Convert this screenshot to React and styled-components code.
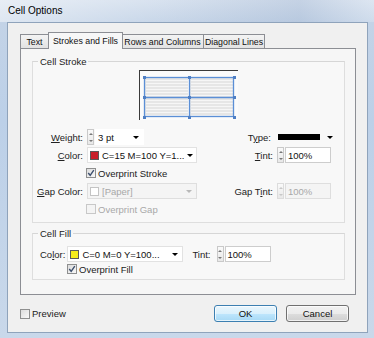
import React from 'react'
import styled, { createGlobalStyle } from 'styled-components'

const GlobalStyle = createGlobalStyle`
  html, body {
    margin: 0;
    padding: 0;
  }
  body {
    width: 374px;
    height: 338px;
    overflow: hidden;
    font-family: "Liberation Sans", Arial, sans-serif;
    font-size: 9px;
    color: #111;
  }
`;

const tabs = [
    { name: 'Text', width: 29 },
    { name: 'Strokes and Fills', width: 75, active: true },
    { name: 'Rows and Columns', width: 82 },
    { name: 'Diagonal Lines', width: 61 },
];

function Spin({ disabled }) {
    return (
        <Spinner $disabled={disabled}>
            <SpinTri $up $disabled={disabled} />
            <SpinTri $disabled={disabled} />
        </Spinner>
    )
}

function Check({ checked, disabled, children }) {
    return (
        <CheckRow $disabled={disabled}>
            <CheckBox $disabled={disabled}>
                {checked && (
                    <svg width="8" height="8" viewBox="0 0 8 8">
                        <polyline points="1.2,4 3.2,6.3 6.8,1.2" fill="none" stroke="#3d4f6e" strokeWidth="1.4" />
                    </svg>
                )}
            </CheckBox>
            {children}
        </CheckRow>
    )
}

function TablePreview() {
    const cells = [[5, 7], [50, 7], [5, 27], [50, 27]];
    const handles = [];
    [5, 50, 95].forEach(x => [7, 27, 47].forEach(y => handles.push([x, y])));
    return (
        <PreviewBox>
            <svg width="99" height="50" viewBox="0 0 99 50">
                <rect x="0" y="0" width="99" height="50" fill="#fbfbfb" />
                {cells.map(([x, y], i) => (
                    <g key={i}>
                        <rect x={x + 1} y={y + 1} width="43" height="19" fill="#e6e6e6" />
                        {[3, 6, 9, 12, 15, 18].map(d => (
                            <line key={d} x1={x + 2} x2={x + 44} y1={y + d + 0.5} y2={y + d + 0.5} stroke="#f6f6f6" strokeWidth="1" />
                        ))}
                    </g>
                ))}
                <rect x="5.5" y="7.5" width="89" height="39" fill="none" stroke="#5b8fd6" strokeWidth="1.3" />
                <line x1="50.5" x2="50.5" y1="7" y2="47" stroke="#5b8fd6" strokeWidth="1.3" />
                <line x1="5" x2="95" y1="27.5" y2="27.5" stroke="#5b8fd6" strokeWidth="1.3" />
                {handles.map(([x, y], i) => (
                    <rect key={i} x={x - 1} y={y - 1} width="3" height="3" fill="#4f7fc4" />
                ))}
                <line x1="0" x2="99" y1="0.5" y2="0.5" stroke="#3a3a3a" />
                <line x1="0.5" x2="0.5" y1="0" y2="50" stroke="#3a3a3a" />
            </svg>
        </PreviewBox>
    )
}

function App() {
    return (
        <>
            <GlobalStyle />
            <Window>
                <TitleBar>Cell Options</TitleBar>
                <Client>
                    <Tabs>
                        {tabs.map(t => (
                            <Tab key={t.name} $active={t.active} $w={t.width}>{t.name}</Tab>
                        ))}
                    </Tabs>
                    <Panel>
                        <Group $top>
                            <Legend>Cell Stroke</Legend>
                            <TablePreview />
                            <StrokeGrid>
                                <Label><u>W</u>eight:</Label>
                                <Inline>
                                    <Spin />
                                    <Select $w={49} $plain>
                                        3 pt
                                        <Arrow />
                                    </Select>
                                </Inline>
                                <Label>T<u>y</u>pe:</Label>
                                <StrokeType>
                                    <BlackLine />
                                    <Arrow />
                                </StrokeType>

                                <Label><u>C</u>olor:</Label>
                                <Select $w={110}>
                                    <Swatch $color="#c8202b" />
                                    C=15 M=100 Y=1...
                                    <Arrow />
                                </Select>
                                <Label><u>T</u>int:</Label>
                                <Inline>
                                    <Spin />
                                    <Field>100%</Field>
                                </Inline>

                                <Empty />
                                <Wide>
                                    <Check checked>Overprint Stroke</Check>
                                </Wide>

                                <Label><u>G</u>ap Color:</Label>
                                <Select $w={110} $disabled>
                                    <Swatch $color="#ffffff" $disabled />
                                    [Paper]
                                    <Arrow $disabled />
                                </Select>
                                <Label>Gap T<u>i</u>nt:</Label>
                                <Inline>
                                    <Spin disabled />
                                    <Field $disabled>100%</Field>
                                </Inline>

                                <Empty />
                                <Wide>
                                    <Check disabled>Overprint Gap</Check>
                                </Wide>
                            </StrokeGrid>
                        </Group>

                        <Group>
                            <Legend>Cell Fill</Legend>
                            <FillRow>
                                <FillLabel>Co<u>l</u>or:</FillLabel>
                                <Select $w={116}>
                                    <Swatch $color="#f5ec1c" />
                                    C=0 M=0 Y=100...
                                    <Arrow />
                                </Select>
                                <FillLabel $gap={9}>Tint:</FillLabel>
                                <Inline>
                                    <Spin />
                                    <Field>100%</Field>
                                </Inline>
                            </FillRow>
                            <FillCheck>
                                <Check checked>Overprint Fill</Check>
                            </FillCheck>
                        </Group>
                    </Panel>
                    <BottomBar>
                        <Check>Preview</Check>
                        <Buttons>
                            <Button $default>OK</Button>
                            <Button>Cancel</Button>
                        </Buttons>
                    </BottomBar>
                </Client>
            </Window>
        </>
    )
}

const Window = styled.div`
    width: 374px;
    height: 338px;
    box-sizing: border-box;
    display: flex;
    flex-direction: column;
    padding: 0 6px 5px 7px;
    background: linear-gradient(180deg, #d5e0ee 0px, #c3d3e7 22px, #bcd0e8 120px, #c9d8ea 338px);
`;

const TitleBar = styled.div`
    height: 22px;
    display: flex;
    align-items: center;
    padding: 0 0 2px 8px;
    box-sizing: border-box;
    font-size: 10px;
    color: #000;
    background: linear-gradient(90deg, rgba(255,255,255,0.45), rgba(255,255,255,0.1) 40%, rgba(150,170,200,0.25) 80%, rgba(255,255,255,0.2));
    margin: 0 -6px 0 -7px;
`;

const Client = styled.div`
    flex: 1;
    display: flex;
    flex-direction: column;
    background: #f0f0f0;
    border: 1px solid #8fa3bb;
    padding: 9px 11px 0 12px;
`;

const Tabs = styled.div`
    display: flex;
    align-items: flex-end;
    height: 17px;
    margin-bottom: -1px;
    position: relative;
    z-index: 1;
`;

const Tab = styled.div`
    width: ${p => p.$w}px;
    height: ${p => p.$active ? '17px' : '15px'};
    box-sizing: border-box;
    margin: 0 ${p => p.$active ? '-1px' : '0'};
    display: flex;
    align-items: center;
    justify-content: center;
    white-space: nowrap;
    border: 1px solid #8c8e94;
    border-bottom: ${p => p.$active ? 'none' : '1px solid #8c8e94'};
    border-left-width: ${p => p.$active ? '1px' : '0'};
    background: ${p => p.$active ? '#f7f7f7' : 'linear-gradient(180deg, #f4f4f4, #e2e2e2)'};
    font-size: 8.8px;
    position: relative;
    z-index: ${p => p.$active ? 2 : 1};

    &:first-child {
        border-left-width: 1px;
    }
`;

const Panel = styled.div`
    height: 247px;
    box-sizing: border-box;
    border: 1px solid #8c8e94;
    background: #f6f6f6;
    padding: 7px 10px 0 11px;
    display: flex;
    flex-direction: column;
`;

const Group = styled.fieldset`
    margin: ${p => p.$top ? '0' : '5px 0 0'};
    padding: 0;
    border: 1px solid #dedede;
    border-top-color: #d6d6d6;
    background: #f8f8f8;
    min-width: 0;
    height: ${p => p.$top ? '167px' : '52px'};
    box-sizing: border-box;
`;

const Legend = styled.legend`
    margin-left: 5px;
    padding: 0 2px;
    font-size: 9.5px;
    color: #222;
    line-height: 11px;
`;

const PreviewBox = styled.div`
    width: 99px;
    height: 50px;
    margin: 3px auto 0;
    svg {
        display: block;
    }
`;

const StrokeGrid = styled.div`
    display: grid;
    grid-template-columns: 50px 110px 1fr 56px;
    column-gap: 4px;
    row-gap: 2px;
    align-items: center;
    padding: 9px 11px 0 0;

    & > :nth-child(3) {
        margin-right: 2px;
    }
`;

const Label = styled.span`
    text-align: right;
    white-space: nowrap;
    font-size: 9.5px;
    color: #222;

    u {
        text-decoration-thickness: 1px;
        text-underline-offset: 1px;
    }
`;

const Empty = styled.span``;

const Wide = styled.div`
    grid-column: 2 / span 3;
    height: 16px;
    display: flex;
    align-items: center;
    margin-left: -1px;
`;

const Inline = styled.div`
    display: flex;
    align-items: center;
    height: 16px;
    gap: 1px;
`;

const Spinner = styled.span`
    width: 7px;
    height: 16px;
    box-sizing: border-box;
    display: flex;
    flex-direction: column;
    justify-content: space-around;
    align-items: center;
    border: 1px solid ${p => p.$disabled ? '#dcdcdc' : '#c9c9c9'};
    background: linear-gradient(180deg, #fafafa, #e8e8e8);
`;

const SpinTri = styled.span`
    width: 0;
    height: 0;
    border-left: 2px solid transparent;
    border-right: 2px solid transparent;
    ${p => p.$up
        ? `border-bottom: 2px solid ${p.$disabled ? '#c8c8c8' : '#777'};`
        : `border-top: 2px solid ${p.$disabled ? '#c8c8c8' : '#777'};`}
`;

const Select = styled.div`
    width: ${p => p.$w}px;
    height: 16px;
    box-sizing: border-box;
    display: flex;
    align-items: center;
    gap: 3px;
    padding: 0 4px 0 2px;
    background: ${p => p.$disabled ? '#f4f4f4' : '#fff'};
    border: 1px solid ${p => p.$plain ? 'transparent' : (p.$disabled ? '#dedede' : '#e2e2e2')};
    color: ${p => p.$disabled ? '#a8a8a8' : '#111'};
    font-size: 9.5px;
    white-space: nowrap;
`;

const Swatch = styled.span`
    width: 9px;
    height: 9px;
    box-sizing: border-box;
    flex: none;
    background: ${p => p.$color};
    border: 1px solid ${p => p.$disabled ? '#c4c4c4' : '#5a5a5a'};
`;

const Arrow = styled.span`
    width: 0;
    height: 0;
    margin-left: auto;
    border-left: 3px solid transparent;
    border-right: 3px solid transparent;
    border-top: 3px solid ${p => p.$disabled ? '#b8b8b8' : '#000'};
`;

const StrokeType = styled.div`
    display: flex;
    align-items: center;
    height: 16px;
    padding-left: 1px;
`;

const BlackLine = styled.span`
    width: 42px;
    height: 6px;
    background: #000;
`;

const Field = styled.div`
    width: 46px;
    height: 16px;
    box-sizing: border-box;
    display: flex;
    align-items: center;
    padding-left: 2px;
    background: ${p => p.$disabled ? '#f4f4f4' : '#fff'};
    border: 1px solid ${p => p.$disabled ? '#dedede' : '#cdcdcd'};
    color: ${p => p.$disabled ? '#a8a8a8' : '#111'};
    font-size: 9.5px;
`;

const FillRow = styled.div`
    display: flex;
    align-items: center;
    padding: 7px 0 0 7px;
`;

const FillLabel = styled.span`
    margin-left: ${p => p.$gap || 0}px;
    margin-right: ${p => p.$gap ? 6 : 2}px;
    font-size: 9.5px;
    color: #222;
`;

const FillCheck = styled.div`
    height: 14px;
    display: flex;
    align-items: center;
    padding-left: 34px;
`;

const CheckRow = styled.label`
    display: flex;
    align-items: center;
    gap: 2px;
    font-size: 9.5px;
    color: ${p => p.$disabled ? '#a8a8a8' : '#222'};
`;

const CheckBox = styled.span`
    width: 10px;
    height: 10px;
    box-sizing: border-box;
    display: flex;
    align-items: center;
    justify-content: center;
    border: 1px solid ${p => p.$disabled ? '#c8c8c8' : '#8e8f8f'};
    background: ${p => p.$disabled ? '#f4f4f4' : 'linear-gradient(135deg, #dcdcdc, #f8f8f8)'};

    svg {
        display: block;
    }
`;

const BottomBar = styled.div`
    flex: 1;
    display: flex;
    align-items: center;
    justify-content: space-between;
    padding: 0 7px 0 0;
`;

const Buttons = styled.div`
    display: flex;
    gap: 9px;
`;

const Button = styled.button`
    width: 63px;
    height: 17px;
    padding: 0;
    font-family: inherit;
    font-size: 9.5px;
    color: #111;
    border-radius: 3px;
    border: 1px solid ${p => p.$default ? '#3c7fb1' : '#707070'};
    background: ${p => p.$default
        ? 'linear-gradient(180deg, #eaf6fd 0%, #d9f0fc 50%, #bee6fd 51%, #a7d9f5 100%)'
        : 'linear-gradient(180deg, #f2f2f2 0%, #ebebeb 50%, #dddddd 51%, #cfcfcf 100%)'};
    box-shadow: inset 0 0 0 1px rgba(255, 255, 255, 0.7);
`;

export default App
